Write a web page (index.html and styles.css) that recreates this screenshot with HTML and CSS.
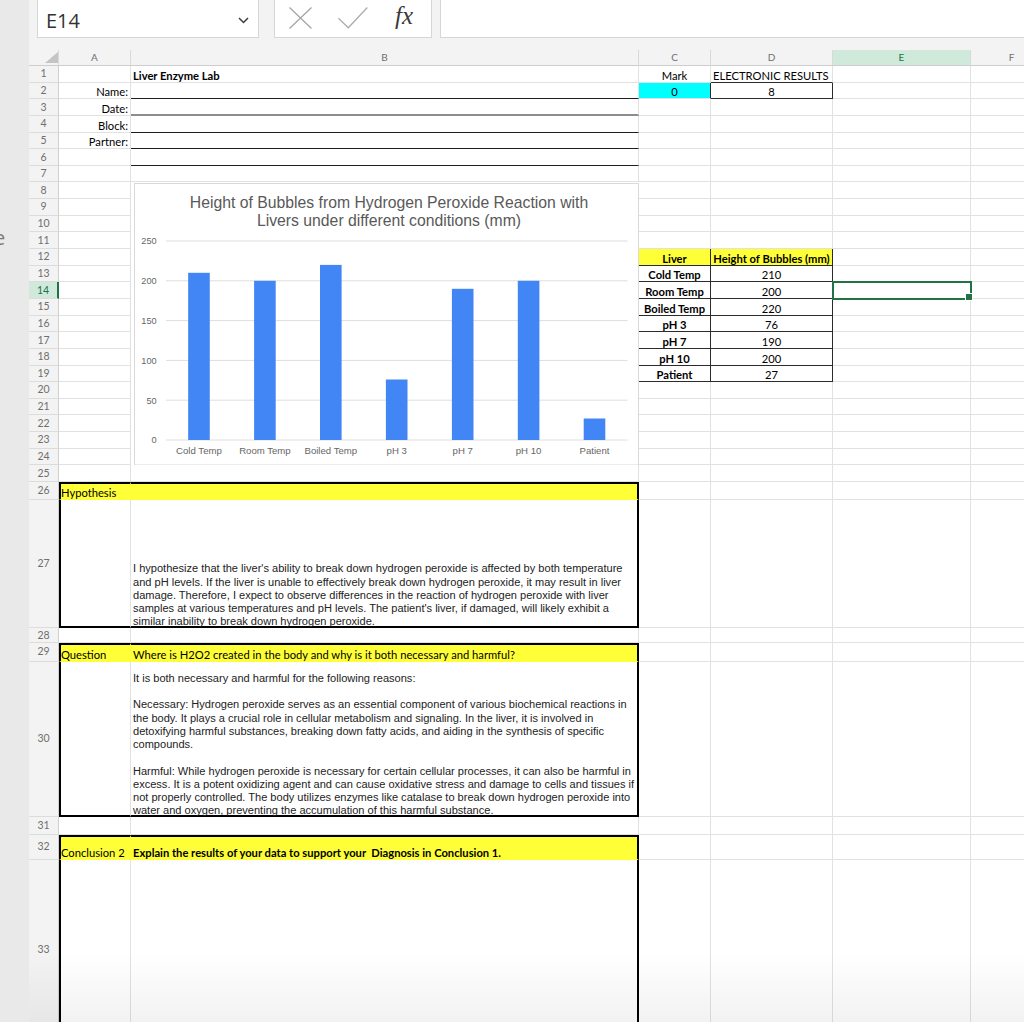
FILE: index.html
```html
<!DOCTYPE html>
<html lang="en">
<head>
<meta charset="utf-8">
<title>Liver Enzyme Lab</title>
<link rel="stylesheet" href="styles.css">
</head>
<body>
<div class="strip"><span>e</span></div>
<div class="main">
  <div class="fbar">
    <div class="namebox">
      <span class="ref">E14</span>
      <svg class="chev" width="11" height="7" viewBox="0 0 11 7"><path d="M1 1 L5.5 5.5 L10 1" fill="none" stroke="#3c3c3c" stroke-width="1.5"/></svg>
    </div>
    <div class="tools">
      <svg class="ic-x" width="23" height="22" viewBox="0 0 23 22"><path d="M0.5 0.5 L22.5 21.5 M22.5 0.5 L0.5 21.5" fill="none" stroke="#a6a6a6" stroke-width="1.3"/></svg>
      <svg class="ic-ok" width="30" height="22" viewBox="0 0 30 22"><path d="M0.5 11.3 L10.3 20.8 L29.3 0.5" fill="none" stroke="#acacac" stroke-width="1.3"/></svg>
      <span class="fx">fx</span>
    </div>
    <div class="finput"></div>
  </div>
  <div class="band"></div>
  <div class="wrap">
    <div class="sheet">
      <!-- header -->
      <div class="ch corner"><svg width="13" height="11" viewBox="0 0 13 11"><polygon points="13,0 13,11 0,11" fill="#c4c4c4"/></svg></div>
      <div class="ch">A</div><div class="ch">B</div><div class="ch">C</div><div class="ch">D</div><div class="ch csel">E</div><div class="ch">F</div>
      <!-- 1 -->
      <div class="rh">1</div><div></div><div class="b">Liver Enzyme Lab</div><div class="m">Mark</div><div class="db">ELECTRONIC RESULTS</div><div></div><div></div>
      <!-- 2 -->
      <div class="rh">2</div><div class="r">Name:</div><div class="ul"></div><div class="m cy dr">0</div><div class="m dr db">8</div><div></div><div></div>
      <!-- 3 -->
      <div class="rh">3</div><div class="r">Date:</div><div class="ul2"></div><div></div><div></div><div></div><div></div>
      <!-- 4 -->
      <div class="rh">4</div><div class="r">Block:</div><div class="ul"></div><div></div><div></div><div></div><div></div>
      <!-- 5 -->
      <div class="rh">5</div><div class="r">Partner:</div><div class="ul"></div><div></div><div></div><div></div><div></div>
      <!-- 6 -->
      <div class="rh">6</div><div></div><div class="ul"></div><div></div><div></div><div></div><div></div>
      <!-- 7 -->
      <div class="rh">7</div><div></div><div></div><div></div><div></div><div></div><div></div>

      <figure class="chart">
        <svg viewBox="0 0 505 282.5" width="505" height="282.5">
          <rect x="0.5" y="0.5" width="504" height="281.5" fill="#fff" stroke="#d9d9d9"/>
          <g class="ttl">
            <text x="255" y="25.4">Height of Bubbles from Hydrogen Peroxide Reaction with</text>
            <text x="255" y="42.6">Livers under different conditions (mm)</text>
          </g>
          <g stroke="#dedede" stroke-width="1">
            <line x1="32" x2="493.5" y1="58" y2="58"/>
            <line x1="32" x2="493.5" y1="97.8" y2="97.8"/>
            <line x1="32" x2="493.5" y1="137.6" y2="137.6"/>
            <line x1="32" x2="493.5" y1="177.4" y2="177.4"/>
            <line x1="32" x2="493.5" y1="217.2" y2="217.2"/>
            <line x1="32" x2="493.5" y1="257" y2="257"/>
          </g>
          <g class="yl">
            <text x="22.7" y="61.4">250</text>
            <text x="22.7" y="101.2">200</text>
            <text x="22.7" y="141">150</text>
            <text x="22.7" y="180.8">100</text>
            <text x="22.7" y="220.6">50</text>
            <text x="22.7" y="260.4">0</text>
          </g>
          <g fill="#4285f4">
            <rect x="54.16" y="89.8" width="21.6" height="167.2"/>
            <rect x="120.1" y="97.8" width="21.6" height="159.2"/>
            <rect x="186.0" y="81.9" width="21.6" height="175.1"/>
            <rect x="251.9" y="196.5" width="21.6" height="60.5"/>
            <rect x="317.9" y="105.8" width="21.6" height="151.2"/>
            <rect x="383.8" y="97.8" width="21.6" height="159.2"/>
            <rect x="449.7" y="235.5" width="21.6" height="21.5"/>
          </g>
          <g class="xl">
            <text x="64.96" y="270.6">Cold Temp</text>
            <text x="130.9" y="270.6">Room Temp</text>
            <text x="196.8" y="270.6">Boiled Temp</text>
            <text x="262.7" y="270.6">pH 3</text>
            <text x="328.7" y="270.6">pH 7</text>
            <text x="394.6" y="270.6">pH 10</text>
            <text x="460.5" y="270.6">Patient</text>
          </g>
        </svg>
      </figure>

      <!-- 8 -->
      <div class="rh">8</div><div></div><div></div><div></div><div></div><div></div>
      <!-- 9 -->
      <div class="rh">9</div><div></div><div></div><div></div><div></div><div></div>
      <!-- 10 -->
      <div class="rh">10</div><div></div><div></div><div></div><div></div><div></div>
      <!-- 11 -->
      <div class="rh">11</div><div></div><div></div><div></div><div></div><div></div>
      <!-- 12 -->
      <div class="rh">12</div><div></div><div class="hy b m dr db">Liver</div><div class="hy b m dr db">Height of Bubbles (mm)</div><div></div><div></div>
      <!-- 13 -->
      <div class="rh">13</div><div></div><div class="b m dr db">Cold Temp</div><div class="m dr db">210</div><div></div><div></div>
      <!-- 14 -->
      <div class="rh hsel">14</div><div></div><div class="b m dr db">Room Temp</div><div class="m dr db">200</div><div class="sel"></div><div></div>
      <!-- 15 -->
      <div class="rh">15</div><div></div><div class="b m dr db">Boiled Temp</div><div class="m dr db">220</div><div></div><div></div>
      <!-- 16 -->
      <div class="rh">16</div><div></div><div class="b m dr db">pH 3</div><div class="m dr db">76</div><div></div><div></div>
      <!-- 17 -->
      <div class="rh">17</div><div></div><div class="b m dr db">pH 7</div><div class="m dr db">190</div><div></div><div></div>
      <!-- 18 -->
      <div class="rh">18</div><div></div><div class="b m dr db">pH 10</div><div class="m dr db">200</div><div></div><div></div>
      <!-- 19 -->
      <div class="rh">19</div><div></div><div class="b m dr db">Patient</div><div class="m dr db">27</div><div></div><div></div>
      <!-- 20 -->
      <div class="rh">20</div><div></div><div></div><div></div><div></div><div></div>
      <!-- 21 -->
      <div class="rh">21</div><div></div><div></div><div></div><div></div><div></div>
      <!-- 22 -->
      <div class="rh">22</div><div></div><div></div><div></div><div></div><div></div>
      <!-- 23 -->
      <div class="rh">23</div><div></div><div></div><div></div><div></div><div></div>
      <!-- 24 -->
      <div class="rh">24</div><div></div><div></div><div></div><div></div><div></div>
      <!-- 25 -->
      <div class="rh">25</div><div></div><div></div><div></div><div></div><div></div><div></div>
      <!-- 26 -->
      <div class="rh">26</div><div class="y nr bt bl">Hypothesis</div><div class="y bt br"></div><div></div><div></div><div></div><div></div>
      <!-- 27 -->
      <div class="rh">27</div><div class="bl bb"></div>
      <div class="br bb"><p class="note">I hypothesize that the liver's ability to break down hydrogen peroxide is affected by both temperature<br>and pH levels. If the liver is unable to effectively break down hydrogen peroxide, it may result in liver<br>damage. Therefore, I expect to observe differences in the reaction of hydrogen peroxide with liver<br>samples at various temperatures and pH levels. The patient's liver, if damaged, will likely exhibit a<br>similar inability to break down hydrogen peroxide.</p></div>
      <div></div><div></div><div></div><div></div>
      <!-- 28 -->
      <div class="rh">28</div><div></div><div></div><div></div><div></div><div></div><div></div>
      <!-- 29 -->
      <div class="rh">29</div><div class="y nr bt bl">Question</div><div class="y bt br">Where is H2O2 created in the body and why is it both necessary and harmful?</div><div></div><div></div><div></div><div></div>
      <!-- 30 -->
      <div class="rh">30</div><div class="bl bb"></div>
      <div class="br bb"><p class="note">It is both necessary and harmful for the following reasons:<br><br>Necessary: Hydrogen peroxide serves as an essential component of various biochemical reactions in<br>the body. It plays a crucial role in cellular metabolism and signaling. In the liver, it is involved in<br>detoxifying harmful substances, breaking down fatty acids, and aiding in the synthesis of specific<br>compounds.<br><br>Harmful: While hydrogen peroxide is necessary for certain cellular processes, it can also be harmful in<br>excess. It is a potent oxidizing agent and can cause oxidative stress and damage to cells and tissues if<br>not properly controlled. The body utilizes enzymes like catalase to break down hydrogen peroxide into<br>water and oxygen, preventing the accumulation of this harmful substance.</p></div>
      <div></div><div></div><div></div><div></div>
      <!-- 31 -->
      <div class="rh">31</div><div></div><div></div><div></div><div></div><div></div><div></div>
      <!-- 32 -->
      <div class="rh">32</div><div class="y nr bt bl">Conclusion 2</div><div class="y b bt br">Explain the results of your data to support your&nbsp; Diagnosis in Conclusion 1.</div><div></div><div></div><div></div><div></div>
      <!-- 33 -->
      <div class="rh">33</div><div class="bl"></div><div class="br"></div><div></div><div></div><div></div><div></div>
    </div>
  </div>
  <div class="hbar"></div>
</div>
</body>
</html>
```

FILE: styles.css
```css
* { box-sizing: border-box; }
html, body { margin: 0; padding: 0; }
body {
  width: 1024px;
  height: 1022px;
  overflow: hidden;
  display: flex;
  background: #f3f3f3;
  font-family: Lato, "Liberation Sans", sans-serif;
}

.strip {
  width: 29px;
  flex: none;
  background: #e9e9e9;
  overflow: hidden;
  padding-top: 228px;
}
.strip span {
  display: block;
  margin-left: -6px;
  font: 20px/20px "Open Sans", sans-serif;
  color: #7a7a7a;
}

.main {
  flex: 1;
  min-width: 0;
  display: flex;
  flex-direction: column;
}

/* formula bar */
.fbar {
  height: 38px;
  flex: none;
  display: flex;
  padding-left: 8px;
}
.namebox {
  width: 222px;
  background: #fff;
  border: 1px solid #d6d6d6;
  border-top: 0;
  display: flex;
  align-items: center;
  padding: 5px 9px 0 8px;
}
.namebox .ref {
  font: 20px/20px "Open Sans", sans-serif;
  color: #333;
}
.namebox .chev { margin-left: auto; margin-top: -2px; }
.tools {
  width: 158px;
  margin-left: 15px;
  background: #fff;
  border: 1px solid #d6d6d6;
  border-top: 0;
  display: flex;
  align-items: flex-start;
  padding: 7px 0 0 14px;
}
.ic-ok { margin-left: 26px; }
.fx {
  margin-left: 27px;
  margin-top: -4px;
  font: italic 25px/25px "Liberation Serif", serif;
  color: #3a3a3a;
}
.finput {
  flex: 1;
  margin-left: 8px;
  background: #fff;
  border: 1px solid #d6d6d6;
  border-top: 0;
  border-right: 0;
}
.band { height: 12px; flex: none; }

/* sheet */
.wrap {
  flex: 1;
  min-height: 0;
  overflow: hidden;
  position: relative;
  background: #fff;
}
.wrap::after {
  content: "";
  position: absolute;
  left: 0;
  right: 0;
  bottom: 0;
  height: 70px;
  background: linear-gradient(rgba(0, 0, 0, 0), rgba(0, 0, 0, 0.05));
  pointer-events: none;
}
.sheet {
  display: grid;
  grid-template-columns: 30px 72px 508px 72px 122px 138px 82px;
  grid-template-rows: 16px repeat(25, 16.65px) 18.3px 127.6px 15.2px 18.7px 155px 18px 25.3px 180px;
}
:where(.sheet > div) {
  border-right: 1px solid #e1e1e1;
  border-bottom: 1px solid #e1e1e1;
  display: flex;
  align-items: flex-end;
  padding: 0 2px 0;
  font-size: 11.2px;
  line-height: 13px;
  white-space: nowrap;
  color: #000;
  min-width: 0;
}

.ch {
  background: #f3f3f3;
  color: #6f6f6f;
  justify-content: center;
  align-items: center;
  font-size: 10px;
  padding: 0;
  border-right-color: #d9d9d9;
  border-bottom-color: #cdcdcd;
}
.corner {
  justify-content: flex-end;
  align-items: flex-end;
  padding: 0 0 2px 0;
}
.csel { background: #cfeadb; color: #217346; }

.rh {
  background: #f3f3f3;
  color: #6f6f6f;
  justify-content: center;
  align-items: center;
  font-size: 10.5px;
  padding: 0;
  border-right-color: #cfcfcf;
  border-bottom-color: #dcdcdc;
}
.hsel {
  background: #cfeadb;
  color: #217346;
  border-right: 2px solid #217346;
}

.r { justify-content: flex-end; }
.m { justify-content: center; }
.b { font-weight: 700; }
.ul { border-bottom-color: #1e1e1e; }
.ul2 { border-bottom: 2px solid #8d8d8d; }
.cy { background: #00ffff; }
.dr { border-right-color: #2b2b2b; }
.db { border-bottom-color: #2b2b2b; }
.hy { background: #ffff38; }
.y { background: #ffff38; border-bottom-color: transparent; }
.nr { border-right-color: transparent; }
.bt { border-top: 2px solid #000; }
.bl { border-left: 2px solid #000; padding-left: 0; }
.br { border-right: 2px solid #000; }
.bb { border-bottom: 2px solid #000; }

.sel {
  position: relative;
  outline: 2px solid #217346;
  outline-offset: -1px;
}
.sel::after {
  content: "";
  position: absolute;
  right: -3px;
  bottom: -3px;
  width: 6px;
  height: 6px;
  background: #217346;
  border: 1px solid #fff;
}

.note {
  margin: 0 0 -2.8px;
  font: 11.05px/13.25px "Liberation Sans", Arial, sans-serif;
  color: #222;
  white-space: nowrap;
}

/* chart */
.chart {
  grid-column: 3;
  grid-row: 9 / 26;
  margin: 0.5px 0 0 3px;
  overflow: hidden;
}
.chart svg { display: block; }
.chart text { font-family: "Liberation Sans", Arial, sans-serif; }
.ttl text { font-size: 15.75px; fill: #595959; text-anchor: middle; }
.yl text { font-size: 9.2px; fill: #666; text-anchor: end; }
.xl text { font-size: 9.6px; fill: #666; text-anchor: middle; }
```
